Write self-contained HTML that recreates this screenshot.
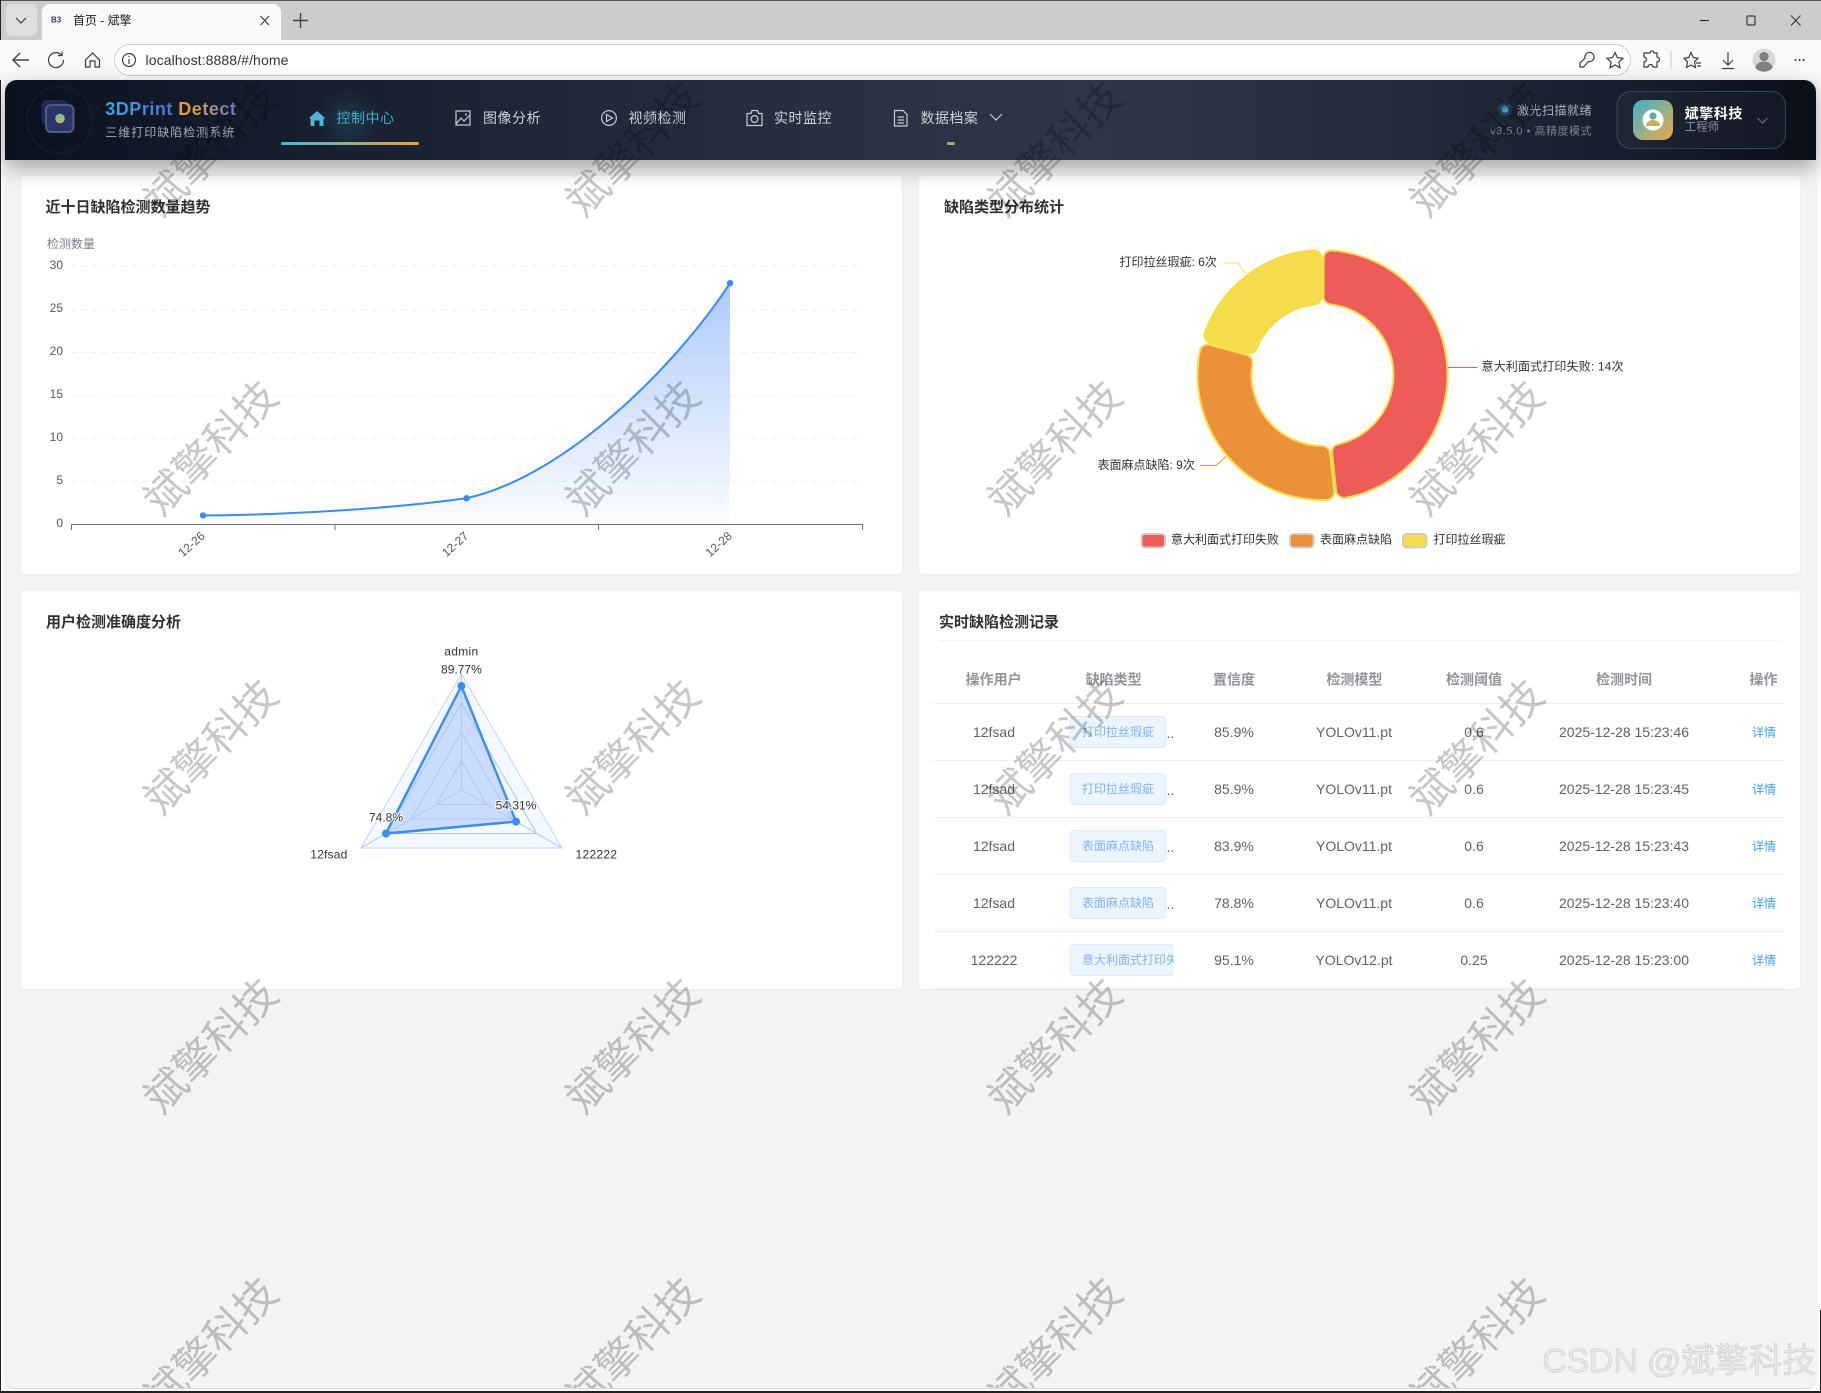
<!DOCTYPE html>
<html lang="zh-CN"><head><meta charset="utf-8"><title>首页 - 斌擎</title>
<style>
html,body{margin:0;padding:0;width:1821px;height:1393px;overflow:hidden;background:#f9f9f9;font-family:"Liberation Sans","Noto Sans CJK SC",sans-serif}
.a{position:absolute}
#page{left:5px;top:80px;width:1811px;height:1308px;background:#f1f3f5;border-radius:0 0 10px 10px;box-shadow:0 1px 1px #d5d5d5}
.card{position:absolute;background:#fff;border-radius:4px;box-shadow:0 1px 3px rgba(0,0,0,.03)}
#hdr{left:5px;top:80px;width:1811px;height:80px;border-radius:12px 12px 0 0;background:linear-gradient(90deg,#0b111e 0%,#141b2b 12%,#1f2738 30%,#2a3243 50%,#2f3648 60%,#262d3e 75%,#1a2030 88%,#0b0f19 100%);box-shadow:0 8px 22px rgba(0,0,0,.32)}
#brand{position:absolute;left:105.3px;top:98px;font-size:18px;line-height:22px;font-weight:bold;letter-spacing:.5px;white-space:nowrap;background:linear-gradient(90deg,#38aadd 0%,#4a70d8 54%,#e49c3a 56%,#c9975c 72%,#6a72c8 100%);-webkit-background-clip:text;background-clip:text;color:transparent}
svg#s{position:absolute;left:0;top:0}
svg text{font-family:"Liberation Sans","Noto Sans CJK SC",sans-serif;dominant-baseline:central}
.ax{font-size:12px;fill:#55585f}
.lb{font-size:12px;fill:#333}
.th{font-size:14px;font-weight:bold;fill:#909399;text-anchor:middle}
.td{font-size:14px;fill:#606266;text-anchor:middle}
.lk{font-size:12px;fill:#409eff;text-anchor:middle}
.tg{font-size:12px;fill:#7fb4fa}
.nav{font-size:14px;fill:#cfd2d8;letter-spacing:.5px}
.ic{fill:none;stroke:#c9ccd2;stroke-width:1.2}
.br{fill:none;stroke:#3d3d3d;stroke-width:1.2}
.wm{font-size:42px;fill:rgba(0,0,0,.22);text-anchor:middle}
</style></head><body>
<div class="a" style="left:0;top:0;width:1821px;height:40px;background:#cccccc"></div>
<div class="a" style="left:0;top:0;width:1821px;height:1px;background:#555"></div>
<div class="a" style="left:0;top:0;width:1px;height:1393px;background:#222"></div>
<div class="a" style="left:0;top:1391px;width:1821px;height:2px;background:#222"></div>
<div class="a" style="left:1820px;top:1310px;width:1px;height:83px;background:#222"></div>
<div class="a" style="left:6px;top:4px;width:31px;height:32px;background:#dedede;border-radius:6px"></div>
<div class="a" style="left:42px;top:4px;width:239px;height:36px;background:#f9f9f9;border-radius:8px 8px 0 0"></div>
<div class="a" style="left:0;top:40px;width:1821px;height:40px;background:#f9f9f9"></div>
<div class="a" style="left:114px;top:44px;width:1515px;height:30px;background:#fff;border:1px solid #cfcfcf;border-radius:16px"></div>
<div class="a" id="page"></div>
<div class="card" style="left:21px;top:176px;width:881px;height:398px"></div>
<div class="card" style="left:919px;top:176px;width:881px;height:398px"></div>
<div class="card" style="left:21px;top:591px;width:881px;height:398px"></div>
<div class="card" style="left:919px;top:591px;width:881px;height:398px"></div>
<div class="a" id="hdr"></div>
<svg id="s" width="1821" height="1393" viewBox="0 0 1821 1393" xmlns="http://www.w3.org/2000/svg">
<defs>
<linearGradient id="ga" x1="0" y1="283" x2="0" y2="524" gradientUnits="userSpaceOnUse"><stop offset="0" stop-color="#3b82f6" stop-opacity=".42"/><stop offset="1" stop-color="#3b82f6" stop-opacity=".02"/></linearGradient>
<linearGradient id="gu" x1="0" y1="0" x2="1" y2="0"><stop offset="0" stop-color="#3fb8d8"/><stop offset="1" stop-color="#f2a22e"/></linearGradient>
<linearGradient id="gd" x1="0" y1="0" x2="1" y2="1"><stop offset="0" stop-color="#4fc0a8"/><stop offset="1" stop-color="#e8b54a"/></linearGradient>
<linearGradient id="gav" x1="0" y1="0" x2="1" y2="1"><stop offset="0" stop-color="#3db2cc"/><stop offset="1" stop-color="#ebaa48"/></linearGradient>
<radialGradient id="gg"><stop offset="0" stop-color="#3fb8d8" stop-opacity=".16"/><stop offset="1" stop-color="#3fb8d8" stop-opacity="0"/></radialGradient>
<clipPath id="ct"><rect x="1060" y="930" width="113.5" height="60"/></clipPath>
<clipPath id="cp"><path d="M5,92 a12,12 0 0 1 12,-12 H1804 a12,12 0 0 1 12,12 V1378 a10,10 0 0 1 -10,10 H15 a10,10 0 0 1 -10,-10 Z"/></clipPath>
</defs>

<!-- browser chrome -->
<path class="br" d="M16,18 L21,23 L26,18"/>
<text x="51" y="20" style="font-size:8px;font-weight:bold;fill:#2d3f66">B3</text>
<text x="73" y="20.5" style="font-size:12px;fill:#222">首页 - 斌擎</text>
<path class="br" d="M260.5,16 L269,25 M269,16 L260.5,25"/>
<path d="M300.5,13 V28 M293,20.5 H308" fill="none" stroke="#444" stroke-width="1.4"/>
<path d="M1700,20.5 H1709" stroke="#333" stroke-width="1.2" fill="none"/>
<rect x="1747" y="16" width="8" height="9" rx="1" class="br"/>
<path class="br" d="M1791,15.5 L1800.5,25.5 M1800.5,15.5 L1791,25.5"/>
<path d="M29,60 H13 M20,53 L13,60 L20,67" fill="none" stroke="#444" stroke-width="1.4"/>
<path class="br" d="M61.5,55 A7.5,7.5 0 1 0 63.5,60 M62,51.5 V55.5 H58"/>
<path class="br" d="M85.5,60 L92.5,53 L99.5,60 V67 H95 V61 H90 V67 H85.5 Z"/>
<circle cx="129" cy="60" r="6.5" class="br"/><path d="M129,59 V64 M129,56 V57.3" stroke="#3d3d3d" stroke-width="1.2"/>
<text x="145.5" y="60" style="font-size:14px;fill:#333;letter-spacing:.1px">localhost:8888/#/home</text>
<path class="br" d="M1580,67 L1580,63 L1585,58 A4.6,4.6 0 1 1 1588.5,61.5 L1583.5,67 Z"/>
<path class="br" d="M1615,52.5 L1617.4,57.6 L1623,58.3 L1618.9,62.2 L1620,67.8 L1615,65 L1610,67.8 L1611.1,62.2 L1607,58.3 L1612.6,57.6 Z"/>
<path class="br" d="M1646,53 H1650 A2,2 0 0 1 1654,53 H1657 V57 A2.5,2.5 0 0 1 1657,62 V67 H1653 A2.5,2.5 0 0 0 1648,67 H1644 V62 A2.5,2.5 0 0 0 1644,57 V53 Z"/>
<path d="M1671,51 V69" stroke="#ccc"/>
<path class="br" d="M1691,52.5 L1693.3,57.5 L1698,58.3 L1694.5,62 L1695.5,67.5 L1691,65 L1686.5,67.5 L1687.5,62 L1684,58.3 L1688.7,57.5 Z M1696,63 H1701 M1697,66 H1701"/>
<path class="br" d="M1728,52 V65 M1723,60 L1728,65 L1733,60 M1722,68.5 H1734"/>
<circle cx="1764" cy="60" r="11.5" fill="#d8d8d8"/><circle cx="1764" cy="56.5" r="4.6" fill="#808080"/><path d="M1755.5,68 A8.5,6.5 0 0 1 1772.5,68 A11.5,11.5 0 0 1 1755.5,68 Z" fill="#808080"/>
<g fill="#333"><circle cx="1795.5" cy="60" r="1"/><circle cx="1799.5" cy="60" r="1"/><circle cx="1803.5" cy="60" r="1"/></g>

<!-- header logo -->
<circle cx="60" cy="120" r="33" fill="none" stroke="#18242f" stroke-width="1"/>
<rect x="41.5" y="100" width="26.5" height="25" rx="5" fill="#1e2a55"/>
<rect x="46" y="105" width="27.5" height="27" rx="5" fill="#2b3668" stroke="#525c7c" stroke-width="2"/>
<circle cx="60" cy="118.5" r="4.8" fill="url(#gd)"/>
<text x="105.3" y="132.7" style="font-size:12px;fill:#a6abb3;letter-spacing:1px">三维打印缺陷检测系统</text>

<!-- nav -->
<circle cx="348" cy="120" r="34" fill="url(#gg)"/>
<path d="M308.5,118.5 L317,111 L325.5,118.5 H323.5 V126 H319.5 V120.5 H314.5 V126 H310.5 V118.5 Z" fill="#4fb5d5"/>
<text x="336.5" y="118" class="nav" style="fill:#41aecb">控制中心</text>
<rect x="281" y="142" width="138" height="3" rx="1.5" fill="url(#gu)"/>
<rect x="456" y="111" width="14" height="14" class="ic"/><path class="ic" d="M456,124 L461,118 L464,121 L470,115"/><circle cx="466" cy="114.5" r="1" fill="#c9ccd2"/>
<text x="483" y="118" class="nav">图像分析</text>
<circle cx="609" cy="118" r="7.4" class="ic"/><path class="ic" d="M606.5,114.5 L612.5,118 L606.5,121.5 Z"/>
<text x="628.5" y="118" class="nav">视频检测</text>
<path class="ic" d="M747,113.5 H751 L752,110.5 H757.5 L758.5,113.5 H762 V125.5 H747 Z"/><circle cx="754.5" cy="119" r="3.4" class="ic"/>
<text x="774" y="118" class="nav">实时监控</text>
<path class="ic" d="M894.5,110.5 H903 L907,114.5 V126 H894.5 Z M897.5,117 H904 M897.5,120 H904 M897.5,123 H904"/>
<text x="920.4" y="118" class="nav">数据档案</text>
<path d="M990,114 L996,120 L1002,114" fill="none" stroke="#c9ccd2" stroke-width="1.2"/>
<rect x="947" y="142" width="7.5" height="3" fill="url(#gu)"/>

<!-- header status -->
<circle cx="1505" cy="109" r="7" fill="#3a9ac0" opacity=".22"/><circle cx="1505" cy="109" r="3.8" fill="#3d9cc4"/>
<text x="1592" y="110.5" style="font-size:12px;fill:#aeb3bb;text-anchor:end;letter-spacing:.5px">激光扫描就绪</text>
<text x="1592" y="131.5" style="font-size:11px;fill:#7c828c;text-anchor:end;letter-spacing:.5px">v3.5.0 • 高精度模式</text>
<rect x="1617" y="91.5" width="168.5" height="57" rx="14" fill="rgba(255,255,255,.03)" stroke="#2c4a55"/>
<rect x="1633" y="100" width="40" height="40" rx="10" fill="url(#gav)"/>
<circle cx="1653" cy="120" r="10.5" fill="#fff"/><circle cx="1653" cy="116" r="3.6" fill="#5fae9c"/><path d="M1646,126 A7,6 0 0 1 1660,126 Z" fill="#c9ac5e"/>
<text x="1684.6" y="113.5" style="font-size:14px;font-weight:bold;fill:#fff;letter-spacing:.6px">斌擎科技</text>
<text x="1684.6" y="127.5" style="font-size:11.5px;fill:#8a9099">工程师</text>
<path d="M1757.5,118 L1762.5,123 L1767.5,118" fill="none" stroke="#6a7280" stroke-width="1.2"/>

<!-- card titles -->
<g style="font-size:15px;font-weight:bold;fill:#303133">
<text x="45.5" y="207.5">近十日缺陷检测数量趋势</text>
<text x="944" y="207.5">缺陷类型分布统计</text>
<text x="46" y="622.5">用户检测准确度分析</text>
<text x="939" y="622.5">实时缺陷检测记录</text>
</g>

<!-- line chart -->
<text x="71" y="244" class="ax" style="text-anchor:middle;fill:#7d8088">检测数量</text>
<g stroke="#f0f0f0" stroke-dasharray="5 5"><path d="M71.5,266.5 H862.5"/><path d="M71.5,309.5 H862.5"/><path d="M71.5,352.5 H862.5"/><path d="M71.5,395.5 H862.5"/><path d="M71.5,438.5 H862.5"/><path d="M71.5,481.5 H862.5"/></g>
<g class="ax" style="text-anchor:end">
<text x="63" y="265" class="ax" text-anchor="end">30</text><text x="63" y="308" class="ax" text-anchor="end">25</text><text x="63" y="351" class="ax" text-anchor="end">20</text><text x="63" y="394" class="ax" text-anchor="end">15</text><text x="63" y="437" class="ax" text-anchor="end">10</text><text x="63" y="480" class="ax" text-anchor="end">5</text><text x="63" y="523" class="ax" text-anchor="end">0</text>
</g>
<path d="M203,515.4 C203,515.4 340,515.4 466.6,498.2 C570,475 680,360 730,283.2 V524 H203 Z" fill="url(#ga)"/>
<path d="M203,515.4 C203,515.4 340,515.4 466.6,498.2 C570,475 680,360 730,283.2" fill="none" stroke="#3b8bf8" stroke-width="2"/>
<g fill="#3b8bf8"><circle cx="203" cy="515.4" r="3.2"/><circle cx="466.6" cy="498.2" r="3.2"/><circle cx="730" cy="283.2" r="3.2"/></g>
<path d="M71.5,524.5 H862.5 M71.5,524 V530 M335,524 V530 M598.5,524 V530 M862.5,524 V530" stroke="#6e7079" fill="none"/>
<g class="ax">
<text transform="translate(203,534) rotate(-42)" text-anchor="end" class="ax">12-26</text>
<text transform="translate(466.6,534) rotate(-42)" text-anchor="end" class="ax">12-27</text>
<text transform="translate(730.2,534) rotate(-42)" text-anchor="end" class="ax">12-28</text>
</g>

<!-- donut -->
<g stroke-linejoin="round">
<path d="M1331.5,258.35 A117,117 0 0 1 1344.06,490 L1339.93,452.05 A79,79 0 0 0 1331.5,296.51 Z" fill="#f5dc4a" stroke="#f5dc4a" stroke-width="18"/>
<path d="M1331.5,258.35 A117,117 0 0 1 1344.06,490 L1339.93,452.05 A79,79 0 0 0 1331.5,296.51 Z" fill="#ed5c59" stroke="#ed5c59" stroke-width="14"/>
<path d="M1326.17,491.94 A117,117 0 0 1 1207.7,352.45 L1244.47,362.67 A79,79 0 0 0 1322.05,454 Z" fill="#f5dc4a" stroke="#f5dc4a" stroke-width="18"/>
<path d="M1326.17,491.94 A117,117 0 0 1 1207.7,352.45 L1244.47,362.67 A79,79 0 0 0 1322.05,454 Z" fill="#ea9139" stroke="#ea9139" stroke-width="14"/>
<path d="M1212.5,335.12 A117,117 0 0 1 1313.5,258.35 L1313.5,296.51 A79,79 0 0 0 1249.28,345.33 Z" fill="#f5dc4a" stroke="#f5dc4a" stroke-width="18"/>
</g>
<path d="M1448,367.5 H1477.5" stroke="#ed5c59" fill="none"/>
<path d="M1223.5,263 H1238 L1245.5,273.5" stroke="#f5dc4a" fill="none"/>
<path d="M1200,465.5 H1216 L1226,456.5" stroke="#ea9139" fill="none"/>
<text x="1481.5" y="366.5" class="lb" style="letter-spacing:.15px">意大利面式打印失败: 14次</text>
<text x="1119.5" y="262" class="lb">打印拉丝瑕疵: 6次</text>
<text x="1097.5" y="465" class="lb">表面麻点缺陷: 9次</text>
<g stroke="#ccc" stroke-width="2">
<rect x="1141.5" y="534" width="23.5" height="13.5" rx="3.5" fill="#ed5c59"/>
<rect x="1290" y="534" width="23.5" height="13.5" rx="3.5" fill="#ea9139"/>
<rect x="1403" y="534" width="23.5" height="13.5" rx="3.5" fill="#f5dc4a"/>
</g>
<text x="1171" y="539.5" class="lb">意大利面式打印失败</text>
<text x="1320" y="539.5" class="lb">表面麻点缺陷</text>
<text x="1433.5" y="539.5" class="lb">打印拉丝瑕疵</text>

<!-- radar -->
<path d="M461.4,674 L561.9,848 H360.9 Z" fill="#f4f8ff" stroke="#bfd6fb"/>
<path d="M360.9,848 H561.9" stroke="#dbe9fd" stroke-width="2"/>
<path d="M461.4,686 L516,821.6 L386,833.5 Z" fill="rgba(59,130,246,.23)"/>
<g fill="none" stroke="#a9c8f8">
<path d="M461.4,703 L536.7,833.5 H386.1 Z"/>
<path d="M461.4,732 L511.6,819 H411.2 Z"/>
<path d="M461.4,761 L486.5,804.5 H436.3 Z"/>
<path d="M461.4,790 V674 M461.4,790 L561.9,848 M461.4,790 L360.9,848"/>
</g>
<path d="M461.4,686 L516,821.6 L386,833.5 Z" fill="none" stroke="#3b8bf8" stroke-width="2.4" stroke-linejoin="round"/>
<g fill="#3b8bf8"><circle cx="461.4" cy="686" r="4"/><circle cx="516" cy="821.6" r="4"/><circle cx="386" cy="833.5" r="4"/></g>
<g class="lb" style="text-anchor:middle">
<text x="461.4" y="651.5" class="lb" text-anchor="middle" style="letter-spacing:.3px">admin</text>
<text x="461.4" y="669.5" class="lb" text-anchor="middle">89.77%</text>
<text x="516" y="805.5" class="lb" text-anchor="middle" stroke="#fff" stroke-width="2" paint-order="stroke">54.31%</text>
<text x="386" y="817.5" class="lb" text-anchor="middle" stroke="#fff" stroke-width="2" paint-order="stroke">74.8%</text>
</g>
<text x="347.5" y="854.5" class="lb" text-anchor="end" style="letter-spacing:.2px">12fsad</text>
<text x="575.5" y="854.5" class="lb" style="letter-spacing:.3px">122222</text>

<!-- table -->
<path d="M939,640.5 H1779" stroke="#f0f1f3"/>
<text x="993.6" y="679.5" class="th">操作用户</text><text x="1113.7" y="679.5" class="th">缺陷类型</text><text x="1234" y="679.5" class="th">置信度</text><text x="1354.4" y="679.5" class="th">检测模型</text><text x="1474" y="679.5" class="th">检测阈值</text><text x="1624" y="679.5" class="th">检测时间</text><text x="1763.5" y="679.5" class="th">操作</text>
<g stroke="#ebeef5"><path d="M934,703.5 H1784"/><path d="M934,760.5 H1784"/><path d="M934,817.5 H1784"/><path d="M934,874.5 H1784"/><path d="M934,931.5 H1784"/><path d="M934,988.5 H1784"/></g>

<g fill="#ecf5ff" stroke="#d9ecff">
<rect x="1070" y="716.5" width="96" height="31" rx="4"/><rect x="1070" y="773.5" width="96" height="31" rx="4"/><rect x="1070" y="830.5" width="96" height="31" rx="4"/><rect x="1070" y="887.5" width="96" height="31" rx="4"/>
<rect x="1070" y="944.5" width="130" height="31" rx="4" clip-path="url(#ct)"/>
</g>
<text x="1082" y="732" class="tg">打印拉丝瑕疵</text><text x="1082" y="789" class="tg">打印拉丝瑕疵</text><text x="1082" y="846" class="tg">表面麻点缺陷</text><text x="1082" y="903" class="tg">表面麻点缺陷</text>
<text x="1082" y="960" class="tg" clip-path="url(#ct)">意大利面式打印失败</text>
<g style="font-size:14px;fill:#606266"><text x="1166.5" y="733">..</text><text x="1166.5" y="790">..</text><text x="1166.5" y="847">..</text><text x="1166.5" y="904">..</text></g>

<text x="994" y="732" class="td">12fsad</text><text x="1234" y="732" class="td">85.9%</text><text x="1354" y="732" class="td">YOLOv11.pt</text><text x="1474" y="732" class="td">0.6</text><text x="1624" y="732" class="td">2025-12-28 15:23:46</text><text x="1764" y="732.5" class="lk">详情</text>
<text x="994" y="789" class="td">12fsad</text><text x="1234" y="789" class="td">85.9%</text><text x="1354" y="789" class="td">YOLOv11.pt</text><text x="1474" y="789" class="td">0.6</text><text x="1624" y="789" class="td">2025-12-28 15:23:45</text><text x="1764" y="789.5" class="lk">详情</text>
<text x="994" y="846" class="td">12fsad</text><text x="1234" y="846" class="td">83.9%</text><text x="1354" y="846" class="td">YOLOv11.pt</text><text x="1474" y="846" class="td">0.6</text><text x="1624" y="846" class="td">2025-12-28 15:23:43</text><text x="1764" y="846.5" class="lk">详情</text>
<text x="994" y="903" class="td">12fsad</text><text x="1234" y="903" class="td">78.8%</text><text x="1354" y="903" class="td">YOLOv11.pt</text><text x="1474" y="903" class="td">0.6</text><text x="1624" y="903" class="td">2025-12-28 15:23:40</text><text x="1764" y="903.5" class="lk">详情</text>
<text x="994" y="960" class="td">122222</text><text x="1234" y="960" class="td">95.1%</text><text x="1354" y="960" class="td">YOLOv12.pt</text><text x="1474" y="960" class="td">0.25</text><text x="1624" y="960" class="td">2025-12-28 15:23:00</text><text x="1764" y="960.5" class="lk">详情</text>

<!-- CSDN mark -->
<text x="1816" y="1361" style="font-size:33.7px;fill:#e8e9eb;text-anchor:end" stroke="#c8c9cb" stroke-width=".6">CSDN @斌擎科技</text>

<!-- watermark -->
<g clip-path="url(#cp)">
<text class="wm" transform="translate(211,149) rotate(-45)">斌擎科技</text><text class="wm" transform="translate(633,149) rotate(-45)">斌擎科技</text><text class="wm" transform="translate(1055,149) rotate(-45)">斌擎科技</text><text class="wm" transform="translate(1477,149) rotate(-45)">斌擎科技</text>
<text class="wm" transform="translate(211,448) rotate(-45)">斌擎科技</text><text class="wm" transform="translate(633,448) rotate(-45)">斌擎科技</text><text class="wm" transform="translate(1055,448) rotate(-45)">斌擎科技</text><text class="wm" transform="translate(1477,448) rotate(-45)">斌擎科技</text>
<text class="wm" transform="translate(211,747) rotate(-45)">斌擎科技</text><text class="wm" transform="translate(633,747) rotate(-45)">斌擎科技</text><text class="wm" transform="translate(1055,747) rotate(-45)">斌擎科技</text><text class="wm" transform="translate(1477,747) rotate(-45)">斌擎科技</text>
<text class="wm" transform="translate(211,1046) rotate(-45)">斌擎科技</text><text class="wm" transform="translate(633,1046) rotate(-45)">斌擎科技</text><text class="wm" transform="translate(1055,1046) rotate(-45)">斌擎科技</text><text class="wm" transform="translate(1477,1046) rotate(-45)">斌擎科技</text>
<text class="wm" transform="translate(211,1345) rotate(-45)">斌擎科技</text><text class="wm" transform="translate(633,1345) rotate(-45)">斌擎科技</text><text class="wm" transform="translate(1055,1345) rotate(-45)">斌擎科技</text><text class="wm" transform="translate(1477,1345) rotate(-45)">斌擎科技</text>
</g>
</svg>
<div id="brand">3DPrint Detect</div>
</body></html>
